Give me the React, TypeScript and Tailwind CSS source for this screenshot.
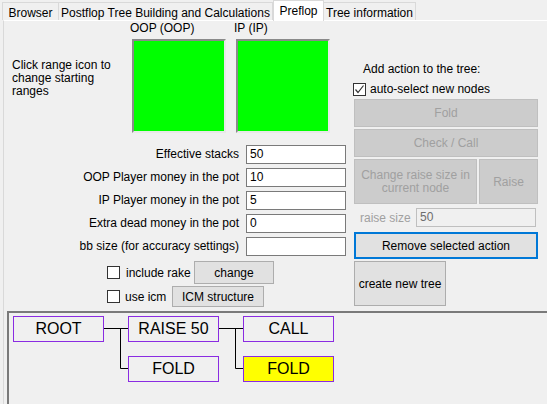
import React from "react";

const Tab = ({ label, w, selected }: { label: string; w: string; selected?: boolean }) =>
  selected ? (
    <div className={`${w} h-[21px] -mb-px relative z-10 bg-white border border-b-0 border-[#d9d9d9] flex items-center justify-center leading-[14px]`}>
      {label}
    </div>
  ) : (
    <div className={`${w} h-[18px] bg-[#f0f0f0] border border-b-0 border-[#d9d9d9] -ml-px first:ml-0 flex items-center justify-center leading-[14px] pt-[2px]`}>
      {label}
    </div>
  );

const Check = ({ checked }: { checked?: boolean }) => (
  <div className="w-[13px] h-[13px] border border-[#333333] bg-white shrink-0 flex items-center justify-center">
    {checked && (
      <svg width="11" height="11" viewBox="0 0 11 11">
        <polyline points="1.5,5.5 4,8.5 9.5,1.5" fill="none" stroke="#333333" strokeWidth="1.2" />
      </svg>
    )}
  </div>
);

const FormRow = ({ label, value }: { label: string; value: string }) => (
  <div className="flex h-[19px] items-center">
    <div className="w-[235px] text-right leading-[19px] whitespace-nowrap">{label}</div>
    <div className="ml-[7px] w-[100px] h-[19px] bg-white border border-[#7a7a7a] pl-[3px] leading-[17px]">{value}</div>
  </div>
);

const Node = ({ label, cls, yellow }: { label: string; cls: string; yellow?: boolean }) => (
  <div
    className={`absolute ${cls} w-[91px] h-[26px] border border-[#8a2be2] ${yellow ? "bg-[#ffff00]" : "bg-[#f0f0f0]"} flex items-center justify-center text-[16px] leading-[18px]`}
  >
    {label}
  </div>
);

export default function App() {
  return (
    <div className="w-[547px] h-[404px] bg-[#f0f0f0] overflow-hidden flex flex-col font-['Liberation_Sans',Arial,sans-serif] text-[12px] text-black">
      {/* tabs */}
      <div className="h-[20px] flex items-end pl-[2px] shrink-0">
        <Tab label="Browser" w="w-[57px]" />
        <Tab label="Postflop Tree Building and Calculations" w="w-[215px]" />
        <Tab label="Preflop" w="w-[51px]" selected />
        <Tab label="Tree information" w="w-[93px]" />
      </div>
      {/* page */}
      <div className="flex-1 flex flex-col ml-[3px] border-t border-t-white border-l border-l-[#d9d9d9]">
        <div className="h-[290px] flex shrink-0">
          {/* left column */}
          <div className="w-[350px] flex flex-col">
            <div className="flex">
              <div className="w-[126px] pl-[8px] pt-[38px] leading-[13px]">
                <div>Click range icon to</div>
                <div>change starting</div>
                <div>ranges</div>
              </div>
              <div className="flex flex-col">
                <div className="h-[14px] leading-[14px]">OOP (OOP)</div>
                <div className="mt-[4px] ml-[2px] w-[94px] h-[94px] bg-[#00ff00] border-2 border-t-[#8a8a8a] border-l-[#8a8a8a] border-b-[#e8e8e8] border-r-[#e8e8e8]" />
              </div>
              <div className="flex flex-col ml-[8px]">
                <div className="h-[14px] leading-[14px]">IP (IP)</div>
                <div className="mt-[4px] ml-[2px] w-[94px] h-[94px] bg-[#00ff00] border-2 border-t-[#8a8a8a] border-l-[#8a8a8a] border-b-[#e8e8e8] border-r-[#e8e8e8]" />
              </div>
            </div>
            <div className="mt-[12px] flex flex-col gap-[4px]">
              <FormRow label="Effective stacks" value="50" />
              <FormRow label="OOP Player money in the pot" value="10" />
              <FormRow label="IP Player money in the pot" value="5" />
              <FormRow label="Extra dead money in the pot" value="0" />
              <FormRow label="bb size (for accuracy settings)" value="" />
            </div>
            <div className="mt-[5px] h-[23px] flex items-center pl-[103px]">
              <Check />
              <div className="ml-[6px] w-[68px] whitespace-nowrap">include rake</div>
              <div className="w-[80px] h-[23px] bg-[#e1e1e1] border border-[#adadad] flex items-center justify-center">change</div>
            </div>
            <div className="mt-[2px] h-[21px] flex items-center pl-[103px]">
              <Check />
              <div className="ml-[5px] w-[47px] whitespace-nowrap">use icm</div>
              <div className="w-[92px] h-[21px] bg-[#e1e1e1] border border-[#adadad] flex items-center justify-center">ICM structure</div>
            </div>
          </div>
          {/* right column */}
          <div className="w-[184px] flex flex-col pt-[41px]">
            <div className="pl-[9px] h-[14px] leading-[14px] whitespace-nowrap">Add action to the tree:</div>
            <div className="mt-[7px] h-[13px] flex items-center -ml-px">
              <Check checked />
              <div className="ml-[4px] whitespace-nowrap leading-[13px]">auto-select new nodes</div>
            </div>
            <div className="mt-[3px] h-[28px] bg-[#cccccc] border border-[#bfbfbf] text-[#a0a0a0] flex items-center justify-center">Fold</div>
            <div className="mt-[2px] h-[28px] bg-[#cccccc] border border-[#bfbfbf] text-[#a0a0a0] flex items-center justify-center">Check / Call</div>
            <div className="mt-[2px] h-[45px] flex gap-[2px]">
              <div className="w-[123px] h-[45px] bg-[#cccccc] border border-[#bfbfbf] text-[#a0a0a0] flex flex-col items-center justify-center text-center leading-[13px]">
                <div>Change raise size in</div>
                <div>current node</div>
              </div>
              <div className="w-[59px] h-[45px] bg-[#cccccc] border border-[#bfbfbf] text-[#a0a0a0] flex items-center justify-center">Raise</div>
            </div>
            <div className="mt-[4px] h-[19px] flex items-center">
              <div className="w-[62px] pl-[6px] text-[#a0a0a0] whitespace-nowrap">raise size</div>
              <div className="w-[120px] h-[19px] border border-[#bfbfbf] bg-[#f0f0f0] text-[#6d6d6d] pl-[3px] leading-[17px]">50</div>
            </div>
            <div className="mt-[5px] h-[27px] bg-[#e1e1e1] border-2 border-[#0078d7] flex items-center justify-center">Remove selected action</div>
            <div className="mt-[2px] w-[92px] h-[45px] bg-[#e1e1e1] border border-[#adadad] flex items-center justify-center">create new tree</div>
          </div>
        </div>
        {/* tree panel */}
        <div className="flex-1 ml-[3px] border-t-2 border-l-2 border-[#7a7a7a] relative">
          <svg className="absolute left-0 top-0" width="540" height="91">
            <g stroke="#000" strokeWidth="1" fill="none">
              <line x1="95" y1="15.5" x2="119" y2="15.5" />
              <polyline points="111.5,15.5 111.5,55.5 119,55.5" />
              <line x1="210" y1="15.5" x2="234" y2="15.5" />
              <polyline points="226.5,15.5 226.5,55.5 234,55.5" />
            </g>
          </svg>
          <Node label="ROOT" cls="left-[4px] top-[3px]" />
          <Node label="RAISE 50" cls="left-[119px] top-[3px]" />
          <Node label="CALL" cls="left-[234px] top-[3px]" />
          <Node label="FOLD" cls="left-[119px] top-[43px]" />
          <Node label="FOLD" cls="left-[234px] top-[43px]" yellow />
        </div>
      </div>
    </div>
  );
}
